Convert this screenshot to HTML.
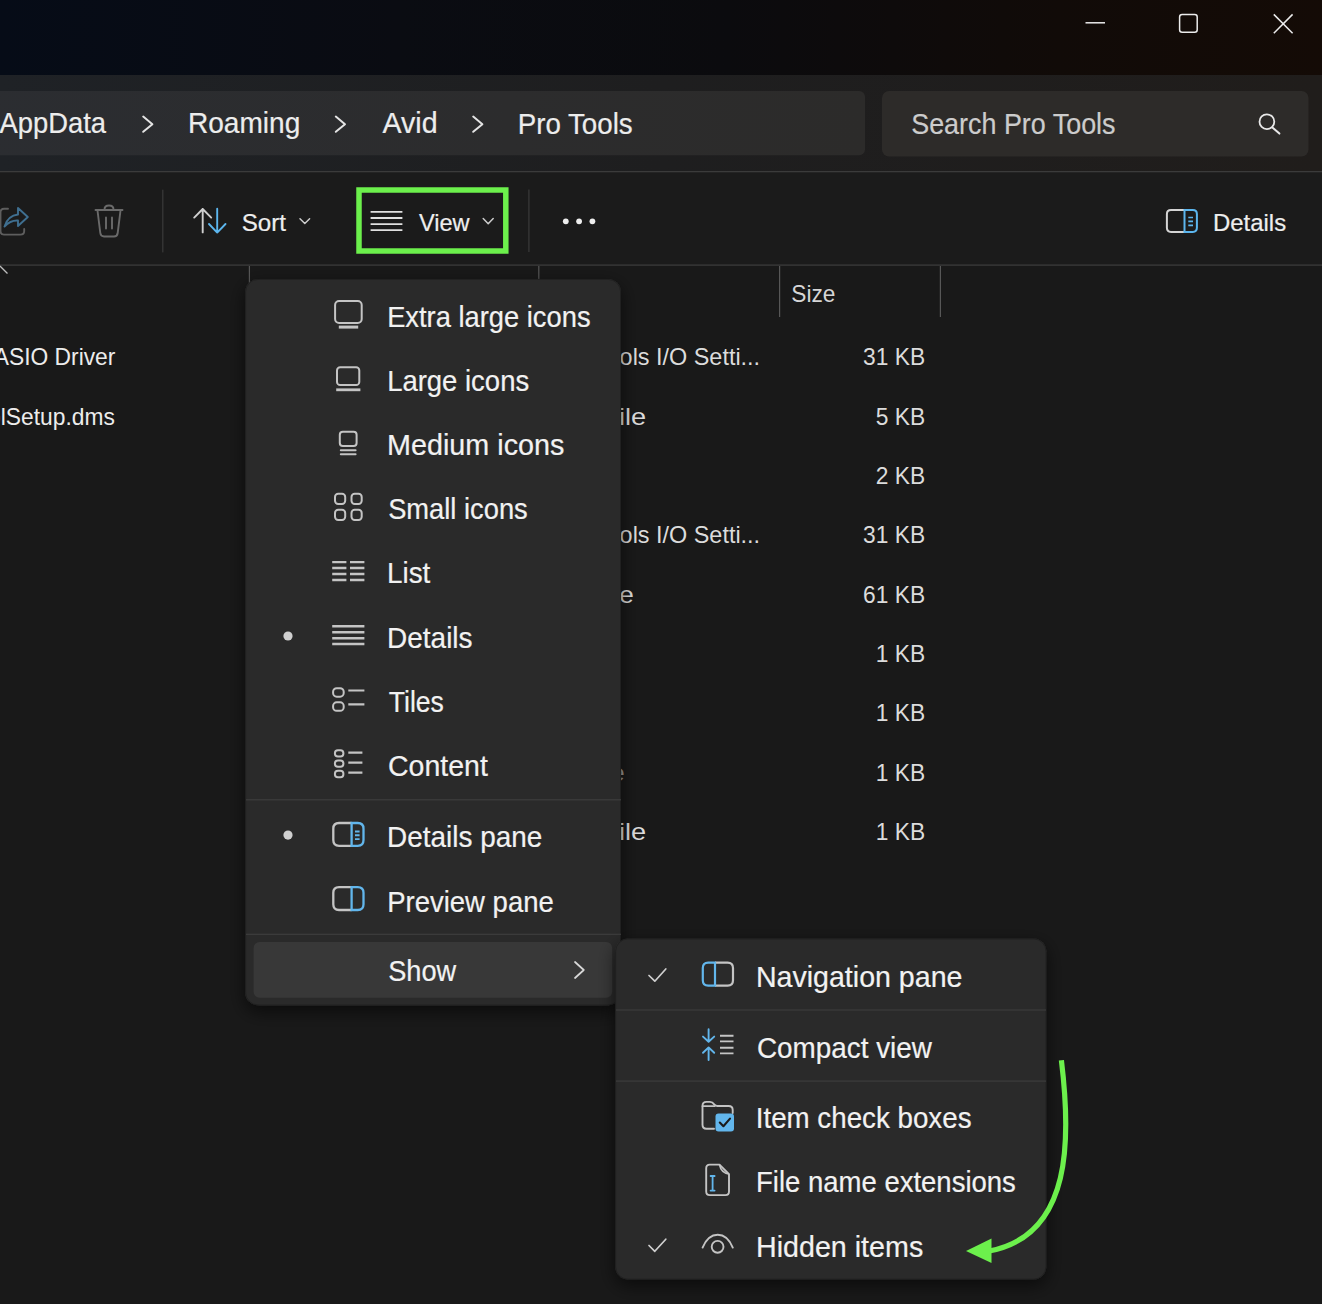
<!DOCTYPE html>
<html><head><meta charset="utf-8">
<style>
html,body{margin:0;padding:0;background:#191919;width:1322px;height:1304px;overflow:hidden}
svg{display:block}
text{font-family:"Liberation Sans",sans-serif}
</style></head><body>
<svg width="1322" height="1304" viewBox="0 0 1322 1304">
<defs>
<linearGradient id="tg" x1="0" y1="0" x2="1" y2="0">
<stop offset="0" stop-color="#060c17"/>
<stop offset="0.3" stop-color="#0a0c12"/>
<stop offset="0.55" stop-color="#0b0b0e"/>
<stop offset="0.8" stop-color="#110b08"/>
<stop offset="1" stop-color="#140b06"/>
</linearGradient>
<linearGradient id="bg2" x1="0" y1="0" x2="1" y2="0">
<stop offset="0" stop-color="#1f2226"/>
<stop offset="0.5" stop-color="#1e1e1f"/>
<stop offset="1" stop-color="#201d1b"/>
</linearGradient>
<linearGradient id="bx" x1="0" y1="0" x2="1" y2="0">
<stop offset="0" stop-color="#2b2d31"/>
<stop offset="0.6" stop-color="#2c2c2d"/>
<stop offset="1" stop-color="#2c2b2a"/>
</linearGradient>
<filter id="sh" x="-10%" y="-10%" width="120%" height="120%">
<feGaussianBlur in="SourceAlpha" stdDeviation="9"/>
<feOffset dy="6"/>
<feComponentTransfer><feFuncA type="linear" slope="0.6"/></feComponentTransfer>
<feMerge><feMergeNode/><feMergeNode in="SourceGraphic"/></feMerge>
</filter>
</defs>

<rect x="0" y="0" width="1322" height="75" fill="url(#tg)"/>
<g stroke="#ececec" fill="none" stroke-width="1.5">
<line x1="1085.5" y1="22.8" x2="1105" y2="22.8"/>
<rect x="1179.6" y="14.6" width="17.6" height="17.6" rx="2.5"/>
<line x1="1273.8" y1="14.4" x2="1292.6" y2="33.2"/>
<line x1="1292.6" y1="14.4" x2="1273.8" y2="33.2"/>
</g>
<rect x="0" y="75" width="1322" height="96.5" fill="url(#bg2)"/>
<rect x="-20" y="91" width="885" height="64.3" rx="6" fill="url(#bx)"/>
<rect x="882" y="91" width="426.5" height="65.5" rx="7" fill="#2d2b29"/>
<text x="-0.57" y="133.00" font-size="29.5" fill="#ededed" stroke="#ededed" stroke-width="0.2" textLength="106.55" lengthAdjust="spacingAndGlyphs" >AppData</text>
<text x="187.98" y="133.00" font-size="29.5" fill="#ededed" stroke="#ededed" stroke-width="0.2" textLength="112.33" lengthAdjust="spacingAndGlyphs" >Roaming</text>
<text x="382.43" y="133.20" font-size="29.5" fill="#ededed" stroke="#ededed" stroke-width="0.2" textLength="55.13" lengthAdjust="spacingAndGlyphs" >Avid</text>
<text x="517.71" y="134.30" font-size="29.5" fill="#ededed" stroke="#ededed" stroke-width="0.2" textLength="114.97" lengthAdjust="spacingAndGlyphs" >Pro Tools</text>
<text x="911.19" y="134.20" font-size="29.5" fill="#cccccc" stroke="#cccccc" stroke-width="0.2" textLength="204.34" lengthAdjust="spacingAndGlyphs" >Search Pro Tools</text>
<g stroke="#e4e4e4" fill="none" stroke-width="2" stroke-linecap="round" stroke-linejoin="round">
<polyline points="143.2,116.6 152.4,124.2 143.2,131.8"/>
<polyline points="335.8,116.6 345,124.2 335.8,131.8"/>
<polyline points="473.2,116.6 482.4,124.2 473.2,131.8"/>
</g>
<g stroke="#e8e8e8" fill="none">
<circle cx="1266.9" cy="121.7" r="7.4" stroke-width="1.8"/>
<line x1="1272.4" y1="127.4" x2="1279.4" y2="133.6" stroke-width="2" stroke-linecap="round"/>
</g>
<rect x="0" y="171" width="1322" height="1.6" fill="#3b3b3b"/>
<rect x="0" y="172.6" width="1322" height="92" fill="#1b1b1b"/>
<rect x="0" y="264.4" width="1322" height="1.4" fill="#3a3a3a"/>
<g fill="none" stroke-width="1.9" stroke-linejoin="round" stroke-linecap="round">
<path d="M8,208.8 H4 Q0.5,208.8 0.5,212.5 V231 Q0.5,234.6 4,234.6 H20.5 Q24.2,234.6 24.2,231 V229" stroke="#5e5e5e"/>
<path d="M4.5,226.5 Q8,215.5 18,214.5 V208 L27.8,217 L18,226 V220.5 Q10.5,220 4.5,226.5 Z" stroke="#3f6f90"/>
</g>
<g fill="none" stroke="#6a6a6a" stroke-width="1.9" stroke-linejoin="round" stroke-linecap="round">
<path d="M95.5,210 H122.5"/>
<path d="M104.5,209.5 Q104.5,205.5 109,205.5 Q113.5,205.5 113.5,209.5"/>
<path d="M97.5,210.5 L100.3,233 Q100.8,236.5 104,236.5 H114 Q117.2,236.5 117.7,233 L120.5,210.5"/>
<path d="M106,217.5 V228.5 M112,217.5 V228.5"/>
</g>
<rect x="162.2" y="189.7" width="1.2" height="62.7" fill="#3a3a3a"/>
<rect x="528.3" y="189.5" width="1.2" height="62.5" fill="#3a3a3a"/>
<g fill="none" stroke-width="1.9" stroke-linecap="round" stroke-linejoin="round">
<path d="M202.7,232.4 V209 M194.2,217.6 L202.7,209 L211.2,217.6" stroke="#cfcfcf"/>
<path d="M217.2,208.8 V232.6 M209,224 L217.2,232.6 L225.5,224" stroke="#5cb6ee"/>
</g>
<text x="241.72" y="231.00" font-size="24.3" fill="#eeeeee" stroke="#eeeeee" stroke-width="0.2" textLength="44.20" lengthAdjust="spacingAndGlyphs" >Sort</text>
<polyline points="300,218.8 304.8,223.5 309.6,218.8" fill="none" stroke="#cccccc" stroke-width="1.5" stroke-linecap="round" stroke-linejoin="round"/>
<rect x="359" y="190" width="146.8" height="61" fill="none" stroke="#6cf04c" stroke-width="5.5"/>
<g stroke="#e0e0e0" stroke-width="1.8"><line x1="370.6" y1="211.8" x2="402.4" y2="211.8"/><line x1="370.6" y1="218" x2="402.4" y2="218"/><line x1="370.6" y1="224.1" x2="402.4" y2="224.1"/><line x1="370.6" y1="230.2" x2="402.4" y2="230.2"/></g>
<text x="418.88" y="230.80" font-size="24.3" fill="#eeeeee" stroke="#eeeeee" stroke-width="0.2" textLength="50.65" lengthAdjust="spacingAndGlyphs" >View</text>
<polyline points="483.2,218.5 488.2,223.8 493.2,218.5" fill="none" stroke="#cccccc" stroke-width="1.5" stroke-linecap="round" stroke-linejoin="round"/>
<g fill="#eeeeee"><circle cx="565.8" cy="221.3" r="2.9"/><circle cx="579.1" cy="221.3" r="2.9"/><circle cx="592.4" cy="221.3" r="2.9"/></g>
<g fill="none" stroke-width="2">
<path d="M1184.5,209.9 H1171 Q1166.9,209.9 1166.9,214 V227.8 Q1166.9,231.9 1171,231.9 H1184.5" stroke="#d4d4d4"/>
<path d="M1184.5,209.9 H1192.8 Q1196.9,209.9 1196.9,214 V227.8 Q1196.9,231.9 1192.8,231.9 H1184.5 Z" stroke="#5cb6ee"/>
<path d="M1188.3,217.5 H1193 M1188.3,221.4 H1193 M1188.3,225.3 H1193" stroke="#5cb6ee" stroke-width="1.7"/>
</g>
<text x="1213.03" y="231.00" font-size="24.3" fill="#eeeeee" stroke="#eeeeee" stroke-width="0.2" textLength="73.09" lengthAdjust="spacingAndGlyphs" >Details</text>
<path d="M0,266 L7.5,273.5" stroke="#bdbdbd" stroke-width="1.3" fill="none"/>
<g fill="#575757"><rect x="248.8" y="266" width="1.2" height="51"/><rect x="538.2" y="266" width="1.2" height="51"/><rect x="779" y="266" width="1.2" height="51"/><rect x="939.8" y="266" width="1.2" height="51"/></g>
<text x="791.28" y="301.60" font-size="23.2" fill="#d6d6d6" stroke="#d6d6d6" stroke-width="0.0" textLength="44.20" lengthAdjust="spacingAndGlyphs" >Size</text>
<text x="863.06" y="365.40" font-size="23.2" fill="#dcdcdc" stroke="#dcdcdc" stroke-width="0.0" textLength="62.12" lengthAdjust="spacingAndGlyphs" >31 KB</text>
<text x="875.77" y="424.60" font-size="23.2" fill="#dcdcdc" stroke="#dcdcdc" stroke-width="0.0" textLength="49.44" lengthAdjust="spacingAndGlyphs" >5 KB</text>
<text x="875.77" y="484.00" font-size="23.2" fill="#dcdcdc" stroke="#dcdcdc" stroke-width="0.0" textLength="49.44" lengthAdjust="spacingAndGlyphs" >2 KB</text>
<text x="863.06" y="543.10" font-size="23.2" fill="#dcdcdc" stroke="#dcdcdc" stroke-width="0.0" textLength="62.12" lengthAdjust="spacingAndGlyphs" >31 KB</text>
<text x="863.06" y="602.50" font-size="23.2" fill="#dcdcdc" stroke="#dcdcdc" stroke-width="0.0" textLength="62.12" lengthAdjust="spacingAndGlyphs" >61 KB</text>
<text x="875.77" y="661.80" font-size="23.2" fill="#dcdcdc" stroke="#dcdcdc" stroke-width="0.0" textLength="49.44" lengthAdjust="spacingAndGlyphs" >1 KB</text>
<text x="875.77" y="721.20" font-size="23.2" fill="#dcdcdc" stroke="#dcdcdc" stroke-width="0.0" textLength="49.44" lengthAdjust="spacingAndGlyphs" >1 KB</text>
<text x="875.77" y="780.60" font-size="23.2" fill="#dcdcdc" stroke="#dcdcdc" stroke-width="0.0" textLength="49.44" lengthAdjust="spacingAndGlyphs" >1 KB</text>
<text x="875.77" y="840.00" font-size="23.2" fill="#dcdcdc" stroke="#dcdcdc" stroke-width="0.0" textLength="49.44" lengthAdjust="spacingAndGlyphs" >1 KB</text>
<text x="-55.28" y="365.40" font-size="23.2" fill="#ececec" stroke="#ececec" stroke-width="0.0" textLength="170.66" lengthAdjust="spacingAndGlyphs" >Avid ASIO Driver</text>
<text x="-71.50" y="424.60" font-size="23.2" fill="#ececec" stroke="#ececec" stroke-width="0.0" textLength="186.32" lengthAdjust="spacingAndGlyphs" >ProToolSetup.dms</text>
<text x="619.61" y="365.40" font-size="23.2" fill="#dcdcdc" stroke="#dcdcdc" stroke-width="0.0" textLength="140.50" lengthAdjust="spacingAndGlyphs" >ols I/O Setti...</text>
<text x="618.96" y="424.60" font-size="23.2" fill="#dcdcdc" stroke="#dcdcdc" stroke-width="0.0" textLength="27.21" lengthAdjust="spacingAndGlyphs" >ile</text>
<text x="619.61" y="543.10" font-size="23.2" fill="#dcdcdc" stroke="#dcdcdc" stroke-width="0.0" textLength="140.50" lengthAdjust="spacingAndGlyphs" >ols I/O Setti...</text>
<text x="619.29" y="602.50" font-size="23.2" fill="#dcdcdc" stroke="#dcdcdc" stroke-width="0.0" textLength="14.56" lengthAdjust="spacingAndGlyphs" >e</text>
<text x="610.96" y="780.60" font-size="23.2" fill="#9a9a9a" stroke="#9a9a9a" stroke-width="0.0" textLength="13.61" lengthAdjust="spacingAndGlyphs" >e</text>
<text x="618.96" y="840.00" font-size="23.2" fill="#dcdcdc" stroke="#dcdcdc" stroke-width="0.0" textLength="27.21" lengthAdjust="spacingAndGlyphs" >ile</text>
<g filter="url(#sh)"><rect x="245.2" y="279" width="375.8" height="726.4" rx="13" fill="#2c2c2c"/></g>
<rect x="245.6" y="279.4" width="375" height="725.6" rx="12.6" fill="none" stroke="#1e1e1e" stroke-width="0.8"/>
<text x="387.15" y="326.80" font-size="29" fill="#f2f2f2" stroke="#f2f2f2" stroke-width="0.2" textLength="203.42" lengthAdjust="spacingAndGlyphs" >Extra large icons</text>
<text x="387.13" y="391.30" font-size="29" fill="#f2f2f2" stroke="#f2f2f2" stroke-width="0.2" textLength="142.03" lengthAdjust="spacingAndGlyphs" >Large icons</text>
<text x="387.03" y="455.00" font-size="29" fill="#f2f2f2" stroke="#f2f2f2" stroke-width="0.2" textLength="177.35" lengthAdjust="spacingAndGlyphs" >Medium icons</text>
<text x="388.17" y="519.30" font-size="29" fill="#f2f2f2" stroke="#f2f2f2" stroke-width="0.2" textLength="139.60" lengthAdjust="spacingAndGlyphs" >Small icons</text>
<text x="387.11" y="583.40" font-size="29" fill="#f2f2f2" stroke="#f2f2f2" stroke-width="0.2" textLength="43.23" lengthAdjust="spacingAndGlyphs" >List</text>
<text x="387.09" y="647.90" font-size="29" fill="#f2f2f2" stroke="#f2f2f2" stroke-width="0.2" textLength="85.46" lengthAdjust="spacingAndGlyphs" >Details</text>
<text x="388.80" y="712.30" font-size="29" fill="#f2f2f2" stroke="#f2f2f2" stroke-width="0.2" textLength="55.11" lengthAdjust="spacingAndGlyphs" >Tiles</text>
<text x="387.97" y="775.80" font-size="29" fill="#f2f2f2" stroke="#f2f2f2" stroke-width="0.2" textLength="99.84" lengthAdjust="spacingAndGlyphs" >Content</text>
<text x="387.10" y="846.60" font-size="29" fill="#f2f2f2" stroke="#f2f2f2" stroke-width="0.2" textLength="155.14" lengthAdjust="spacingAndGlyphs" >Details pane</text>
<text x="387.13" y="911.60" font-size="29" fill="#f2f2f2" stroke="#f2f2f2" stroke-width="0.2" textLength="166.69" lengthAdjust="spacingAndGlyphs" >Preview pane</text>
<rect x="246" y="799.2" width="375" height="1.2" fill="#3d3d3d"/>
<rect x="246" y="933.7" width="375" height="1.2" fill="#3d3d3d"/>
<rect x="253.6" y="941.9" width="358.6" height="55.9" rx="6" fill="#383838"/>
<text x="388.18" y="981.20" font-size="29" fill="#f2f2f2" stroke="#f2f2f2" stroke-width="0.2" textLength="68.03" lengthAdjust="spacingAndGlyphs" >Show</text>
<polyline points="575,962 583.8,970 575,978" fill="none" stroke="#d8d8d8" stroke-width="1.7" stroke-linecap="round" stroke-linejoin="round"/>
<g fill="#d0d0d0"><circle cx="288" cy="636" r="4.6"/><circle cx="288" cy="835.1" r="4.6"/></g>
<g fill="none" stroke="#c4c4c4" stroke-width="2" stroke-linecap="round" stroke-linejoin="round">
<rect x="335.1" y="301.1" width="26.6" height="21.9" rx="4"/>
<path d="M338.8,327.1 H358.2" stroke-width="3" stroke-linecap="butt"/>
<rect x="337" y="367.2" width="22.3" height="17.9" rx="3.2"/>
<path d="M336.2,389.8 H360.4" stroke-width="2.8" stroke-linecap="butt"/>
<rect x="339.8" y="431.7" width="16.8" height="14.4" rx="3"/>
<path d="M340.8,450.2 H355.6 M340.8,454.2 H355.6"/>
<rect x="335" y="493.8" width="10.2" height="10.2" rx="3.2"/>
<rect x="351.5" y="493.8" width="10.2" height="10.2" rx="3.2"/>
<rect x="335" y="509.8" width="10.2" height="10.2" rx="3.2"/>
<rect x="351.5" y="509.8" width="10.2" height="10.2" rx="3.2"/>
<path d="M332.2,562.1 H346.4 M332.2,568 H346.4 M332.2,574 H346.4 M332.2,580 H346.4 M350,562.1 H364.4 M350,568 H364.4 M350,574 H364.4 M350,580 H364.4" stroke-width="2.3" stroke-linecap="butt"/>
<path d="M332.2,626.3 H364.4 M332.2,632.2 H364.4 M332.2,638.2 H364.4 M332.2,644.1 H364.4" stroke-width="2.5" stroke-linecap="butt"/>
<rect x="333.1" y="688.2" width="10.6" height="8.5" rx="3.6"/>
<rect x="333.1" y="702.3" width="10.6" height="8.5" rx="3.6"/>
<path d="M348.3,690.5 H364.4 M348.3,704.3 H364.4" stroke-width="2.2" stroke-linecap="butt"/>
<rect x="334.9" y="750.2" width="8.5" height="6.2" rx="3"/>
<rect x="334.9" y="760.4" width="8.5" height="6.4" rx="3"/>
<rect x="334.9" y="770.8" width="8.5" height="6.4" rx="3"/>
<path d="M348.3,752.6 H362.4 M348.3,762.7 H362.4 M348.3,772.6 H362.4" stroke-width="2.2" stroke-linecap="butt"/>
</g>
<g fill="none" stroke-width="2.3">
<path d="M351.6,823 H339 Q333.3,823 333.3,828.7 V840.1 Q333.3,845.8 339,845.8 H351.6" stroke="#c4c4c4"/>
<path d="M351.6,823 H357.8 Q363.5,823 363.5,828.7 V840.1 Q363.5,845.8 357.8,845.8 H351.6 Z" stroke="#62b6ec"/>
<path d="M355,831.5 H359.6 M355,835.3 H359.6 M355,839.1 H359.6" stroke="#62b6ec" stroke-width="1.9"/>
<path d="M351.6,887.1 H339 Q333.3,887.1 333.3,892.8 V904.3 Q333.3,910 339,910 H351.6" stroke="#c4c4c4"/>
<path d="M351.6,887.1 H357.8 Q363.5,887.1 363.5,892.8 V904.3 Q363.5,910 357.8,910 H351.6 Z" stroke="#62b6ec"/>
</g>
<g filter="url(#sh)"><rect x="615.2" y="938.5" width="431.2" height="341.1" rx="13" fill="#2c2c2c"/></g>
<rect x="615.6" y="938.9" width="430.4" height="340.3" rx="12.6" fill="none" stroke="#1e1e1e" stroke-width="0.8"/>
<text x="755.94" y="986.60" font-size="29" fill="#f2f2f2" stroke="#f2f2f2" stroke-width="0.2" textLength="206.48" lengthAdjust="spacingAndGlyphs" >Navigation pane</text>
<text x="756.91" y="1057.70" font-size="29" fill="#f2f2f2" stroke="#f2f2f2" stroke-width="0.2" textLength="175.02" lengthAdjust="spacingAndGlyphs" >Compact view</text>
<text x="755.73" y="1128.30" font-size="29" fill="#f2f2f2" stroke="#f2f2f2" stroke-width="0.2" textLength="215.81" lengthAdjust="spacingAndGlyphs" >Item check boxes</text>
<text x="756.03" y="1192.40" font-size="29" fill="#f2f2f2" stroke="#f2f2f2" stroke-width="0.2" textLength="259.82" lengthAdjust="spacingAndGlyphs" >File name extensions</text>
<text x="755.94" y="1257.10" font-size="29" fill="#f2f2f2" stroke="#f2f2f2" stroke-width="0.2" textLength="167.30" lengthAdjust="spacingAndGlyphs" >Hidden items</text>
<rect x="616" y="1009.4" width="430" height="1.2" fill="#3d3d3d"/>
<rect x="616" y="1080.5" width="430" height="1.2" fill="#3d3d3d"/>
<g fill="none" stroke="#d0d0d0" stroke-width="1.7" stroke-linecap="round" stroke-linejoin="round">
<polyline points="649,975.5 654.8,981.2 665.8,969"/>
<polyline points="649,1245.5 654.8,1251.3 665.8,1239.2"/>
</g>
<g fill="none" stroke-width="2.2">
<path d="M715,962.7 H727.6 Q733,962.7 733,968.1 V980.2 Q733,985.6 727.6,985.6 H715" stroke="#c4c4c4"/>
<path d="M715,962.7 H708.2 Q702.8,962.7 702.8,968.1 V980.2 Q702.8,985.6 708.2,985.6 H715 Z" stroke="#62b6ec"/>
</g>
<g fill="none" stroke="#62b6ec" stroke-width="1.9" stroke-linecap="round" stroke-linejoin="round">
<path d="M708.6,1029.3 V1041.5 M703,1036.6 L708.6,1041.8 L714.2,1036.6"/>
<path d="M708.6,1060 V1047.6 M703,1052.8 L708.6,1047.4 L714.2,1052.8"/>
</g>
<g stroke="#c4c4c4" stroke-width="1.9">
<path d="M720,1035.8 H733.5 M720,1041.4 H733.5 M720,1047.8 H733.5 M720,1053.4 H733.5"/>
</g>
<g fill="none" stroke="#c4c4c4" stroke-width="1.9" stroke-linejoin="round" stroke-linecap="round">
<path d="M714,1128.8 H706.5 Q702.5,1128.8 702.5,1124.8 V1106 Q702.5,1101.9 706.5,1101.9 H710 Q712.5,1101.9 714.2,1104.4 Q715.5,1106 717.5,1106 H728.6 Q732.7,1106 732.7,1110.1 V1113"/>
<path d="M702.5,1106.2 H714.6" stroke-width="1.7"/>
</g>
<rect x="715.5" y="1113.5" width="18.5" height="18" rx="3" fill="#62b6ec"/>
<polyline points="719.8,1122.6 723.4,1126.2 730,1118.6" fill="none" stroke="#1a1a1a" stroke-width="2.1" stroke-linecap="round" stroke-linejoin="round"/>
<g fill="none" stroke="#c4c4c4" stroke-width="1.9" stroke-linejoin="round">
<path d="M719.5,1164.6 H709.8 Q706.2,1164.6 706.2,1168.2 V1191.5 Q706.2,1195.1 709.8,1195.1 H725.4 Q729,1195.1 729,1191.5 V1174.1 Z"/>
</g>
<path d="M719.5,1164.8 Q721,1172.4 728.8,1174" fill="none" stroke="#c4c4c4" stroke-width="1.6"/>
<g stroke="#62b6ec" stroke-width="1.8" stroke-linecap="round">
<path d="M712.6,1176.2 V1190.4 M710.6,1176 H714.6 M710.6,1190.6 H714.6"/>
</g>
<g fill="none" stroke="#c4c4c4" stroke-width="1.9" stroke-linecap="round">
<path d="M702.6,1247.6 Q708,1234.8 717.7,1234.8 Q727.4,1234.8 732.8,1247.6"/>
<circle cx="717.6" cy="1246.8" r="5.9"/>
</g>
<path d="M1061.4,1060.2 C1070.5,1135 1074,1236 988,1251.3" fill="none" stroke="#6cf04c" stroke-width="5.2" stroke-linecap="butt"/>
<polygon points="966,1251 991.5,1238.5 991.5,1263" fill="#6cf04c"/>

</svg>
</body></html>
